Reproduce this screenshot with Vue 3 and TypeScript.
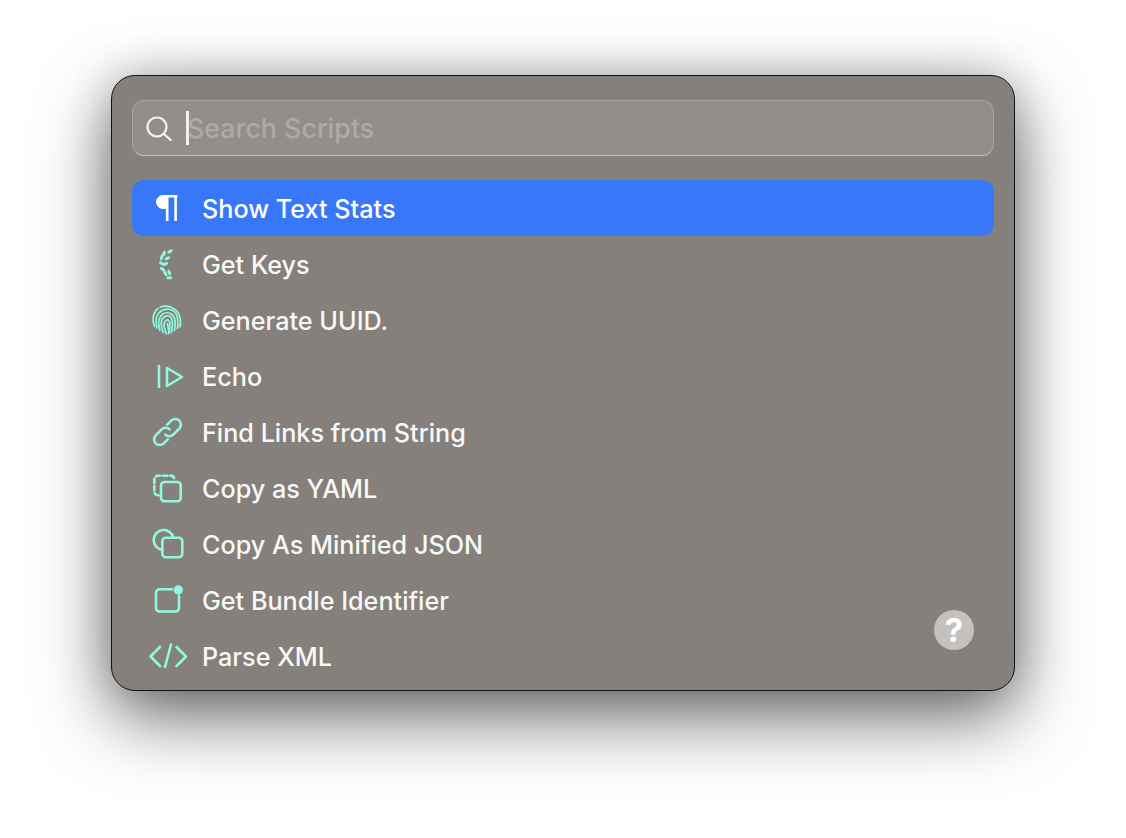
<script setup lang="ts">
const rows: { icon: string; label: string }[] = [
  { icon: 'para', label: 'Show Text Stats' },
  { icon: 'wheat', label: 'Get Keys' },
  { icon: 'finger', label: 'Generate UUID.' },
  { icon: 'echo', label: 'Echo' },
  { icon: 'link', label: 'Find Links from String' },
  { icon: 'dashcopy', label: 'Copy as YAML' },
  { icon: 'circlecopy', label: 'Copy As Minified JSON' },
  { icon: 'badge', label: 'Get Bundle Identifier' },
  { icon: 'code', label: 'Parse XML' },
]
const leaves: [number, number, number][] = [
  [23, 7.5, -35], [17, 9.5, -70], [20.3, 14.3, -30], [14.7, 13.5, -78],
  [18.3, 20, -25], [14.7, 19.3, 30], [22.3, 28.5, 65], [15.5, 25.3, 35],
  [18.3, 29.3, 60], [22.3, 33.7, 0],
]
</script>

<template>
  <div class="page">
    <div class="window">
      <div class="search">
        <svg class="search-icon" viewBox="0 0 28 28" fill="none" stroke="#f4f3f1" stroke-width="2.200" stroke-linecap="round">
          <circle cx="11" cy="13" r="9.500" />
          <path d="M18 20 24.600 26" />
        </svg>
        <span class="caret"></span>
        <span class="placeholder">Search Scripts</span>
      </div>
      <ul class="list">
        <li v-for="(row, i) in rows" :key="row.label" class="row" :class="{ active: i === 0 }">
          <svg class="icon" viewBox="0 0 40 40" fill="none" stroke="#90f8e0" stroke-width="2.600" stroke-linecap="round" stroke-linejoin="round">
            <g v-if="row.icon === 'para'">
              <path d="M19.500 7.500H16a6.500 6.500 0 0 0 0 13h3.500V7.500Z" fill="#fff" stroke="#fff" stroke-width="1" />
              <path d="M18 8.300h12.500M20.200 8v25M28.600 8v25" stroke="#fff" stroke-width="2.600" stroke-linecap="butt" />
            </g>
            <g v-else-if="row.icon === 'wheat'">
              <ellipse v-for="(l, k) in leaves" :key="k" :cx="l[0]" :cy="l[1]" rx="3" ry="1.600" fill="#90f8e0" stroke="none" :transform="`rotate(${l[2]} ${l[0]} ${l[1]})`" />
            </g>
            <g v-else-if="row.icon === 'finger'" stroke-width="1.700">
              <path d="M7.500 26.500C5 20.500 5.500 13 11 8.500" />
              <path d="M13 7.200C20 4.500 29 7.500 32 14.500 33.500 18 33.800 23 33 27" />
              <path d="M10 28C8 21 9 14.500 14 11c6-4 14-1.500 16 5 1 3.500 1 8 .5 12.500" />
              <path d="M12.800 30.500C11 24 11 17.500 15.500 14.200c4.500-3 10.500-1 12 4 1 3.500.8 8-.2 12.500" />
              <path d="M16.200 32.500C13.500 26 13.500 20 17 17c3.500-2.500 7.500-.8 8.200 3 .6 3.500.2 8-1 12.500" />
              <path d="M19.500 33.800C17 28.500 16.200 23.500 18.500 20.800c2-2 4-.8 4.300 1.700.3 3.500-.2 7-1 11" />
              <path d="M20.500 23.500c.3 3.500 .9 6.500 2 9" />
            </g>
            <g v-else-if="row.icon === 'echo'">
              <path d="M12 10v21" />
              <path d="M20 12v18l15-9Z" />
            </g>
            <g v-else-if="row.icon === 'link'">
              <path d="M20.200 12.700 24.300 8.600a5.700 5.700 0 0 1 8 0 5.700 5.700 0 0 1 0 8l-6 6a5.700 5.700 0 0 1-8 0" />
              <path d="M20.800 27.300 16.700 31.400a5.700 5.700 0 0 1-8 0 5.700 5.700 0 0 1 0-8l6-6a5.700 5.700 0 0 1 8 0" />
            </g>
            <g v-else-if="row.icon === 'dashcopy'">
              <path d="M11.500 27.300H10.800A3.500 3.500 0 0 1 7.300 23.800v-12.500A3.500 3.500 0 0 1 10.800 7.800h12A3.500 3.500 0 0 1 27.300 11.300" stroke-dasharray="4.500 2.800" />
              <rect x="14" y="14" width="19.700" height="19.300" rx="3.500" />
            </g>
            <g v-else-if="row.icon === 'circlecopy'">
              <path d="M15.300 25.900A10 10 0 1 1 26.400 13.700" />
              <rect x="15.300" y="13.700" width="20" height="19.600" rx="3.500" />
            </g>
            <g v-else-if="row.icon === 'badge'">
              <path d="M25 9.300H12.500A3.500 3.500 0 0 0 9 12.800v15.200a3.500 3.500 0 0 0 3.500 3.500H28.500a3.500 3.500 0 0 0 3.500-3.500V16" />
              <circle cx="31.300" cy="10" r="4.700" fill="#90f8e0" stroke="none" />
            </g>
            <g v-else-if="row.icon === 'code'">
              <path d="M13 11 3.500 20.500 13 30M29.500 11 39 20.500 29.500 30M24 8.500 18 31" />
            </g>
          </svg>
          <span class="label">{{ row.label }}</span>
        </li>
      </ul>
      <div class="help">?</div>
    </div>
  </div>
</template>

<style>
html, body { margin: 0; background: #fff; }
</style>

<style scoped>
.page {
  width: 1126px;
  height: 838px;
  padding: 75px 0 0 111px;
  box-sizing: border-box;
  overflow: hidden;
  background: #fff;
}
.window {
  position: relative;
  width: 904px;
  height: 616px;
  box-sizing: border-box;
  padding: 24px 20px 0 20px;
  border-radius: 24px;
  background: #85807b;
  border: 1px solid #141312;
  box-shadow: 0 26px 72px rgba(0, 0, 0, 0.58), 0 0 44px rgba(0, 0, 0, 0.18);
  font-family: Inter, "Liberation Sans", sans-serif;
}
.search {
  height: 56px;
  box-sizing: border-box;
  display: flex;
  align-items: center;
  padding-left: 13px;
  border-radius: 12px;
  background: #938e89;
  border: 1px solid #a8a4a0;
  border-bottom-color: #c4c1bd;
}
.search-icon {
  width: 28px;
  height: 28px;
  flex: none;
}
.caret {
  width: 3px;
  height: 34px;
  margin-left: 12px;
  background: #f1f0ef;
  flex: none;
}
.placeholder {
  margin-left: -2px;
  font-size: 26.800px;
  font-weight: 500;
  color: #aeaaa6;
}
.list {
  list-style: none;
  margin: 24px 0 0;
  padding: 0;
}
.row {
  height: 56px;
  display: flex;
  align-items: center;
  border-radius: 12px;
  padding-left: 15px;
  color: #f8f8f7;
}
.row.active {
  background: #3878f8;
  color: #fff;
}
.icon {
  width: 40px;
  height: 40px;
  flex: none;
  overflow: visible;
}
.label {
  margin-left: 15px;
  padding-top: 2px;
  font-size: 25.200px;
  font-weight: 500;
}
.help {
  position: absolute;
  left: 822px;
  top: 534px;
  width: 40px;
  height: 40px;
  border-radius: 50%;
  background: #c5c1be;
  color: #fff;
  font-size: 33px;
  font-weight: 700;
  line-height: 40px;
  text-align: center;
}
</style>
